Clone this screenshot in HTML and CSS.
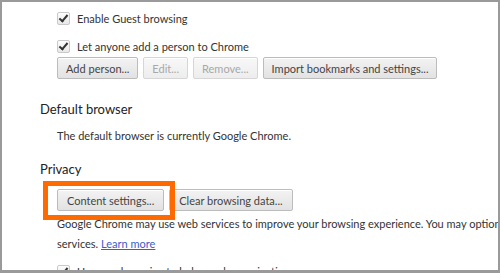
FILE: index.html
```html
<!DOCTYPE html>
<html lang="en">
<head>
  <meta charset="UTF-8">
  <title>Settings - Privacy</title>
  <link rel="stylesheet" href="styles.css">
</head>
<body>
  <div class="frame">
    <div class="settings">

      <div class="section-body">
        <label class="check-row">
          <span class="checkbox checked"></span>
          <span>Enable Guest browsing</span>
        </label>
        <label class="check-row">
          <span class="checkbox checked"></span>
          <span>Let anyone add a person to Chrome</span>
        </label>
        <div class="button-row">
          <button class="button">Add person...</button>
          <button class="button" disabled>Edit...</button>
          <button class="button" disabled>Remove...</button>
          <button class="button">Import bookmarks and settings...</button>
        </div>
      </div>

      <h3 class="section-title title-default">Default browser</h3>
      <div class="section-body">
        <p class="info">The default browser is currently Google Chrome.</p>
      </div>

      <h3 class="section-title title-privacy">Privacy</h3>
      <div class="section-body">
        <div class="button-row privacy-row">
          <span class="highlight"></span>
          <button class="button">Content settings...</button>
          <button class="button">Clear browsing data...</button>
        </div>
        <p class="info wrap">Google Chrome may use web services to improve your browsing experience. You may optionally disable these<br>services. <a href="#" class="link">Learn more</a></p>
        <label class="check-row last-row">
          <span class="checkbox checked"></span>
          <span>Use a web service to help resolve navigation errors</span>
        </label>
      </div>

    </div>
  </div>
</body>
</html>
```

FILE: styles.css
```css
:root {
  --text-color: #333;
  --muted-text: #a8a8a8;
  --frame-color: #9a9a9a;
  --highlight: #ff6a00;
  --link-color: #3b5ccc;

  --primary-font: Lato, "Open Sans", sans-serif;
}

body {
  margin: 0;
  font-family: var(--primary-font);
  color: var(--text-color);
  background: #fff;
}

.frame {
  width: 500px;
  height: 273px;
  box-sizing: border-box;
  border: 2px solid var(--frame-color);
  border-bottom-width: 3px;
  overflow: hidden;
  background: #fff;
}

.settings {
  padding: 9px 0 0 38px;
  font-size: 11px;
  white-space: nowrap;
}

.section-body {
  padding-left: 17px;
}

.check-row {
  display: flex;
  align-items: center;
  gap: 7px;
  height: 14px;
  margin-bottom: 14px;
}

.checkbox {
  width: 11px;
  height: 11px;
  border: 1px solid #c9c9c9;
  border-radius: 2px;
  background: linear-gradient(#fdfdfd, #e8e8e8);
  position: relative;
  flex-shrink: 0;
}

/* the tick */
.checkbox.checked::after {
  content: "";
  position: absolute;
  left: 3px;
  top: 0px;
  width: 3px;
  height: 7px;
  border: solid #333;
  border-width: 0 2px 2px 0;
  transform: rotate(40deg);
}

.button-row {
  display: flex;
  gap: 5px;
  margin-top: -10px;
}

.button {
  height: 22px;
  padding: 0 8px;
  border: 1px solid #bcbcbc;
  border-radius: 2px;
  background: linear-gradient(#f3f3f3, #e2e2e2);
  font-family: var(--primary-font);
  font-size: 11px;
  color: #444;
  box-shadow: inset 0 1px 0 #fff;
}

.button:disabled {
  color: var(--muted-text);
  border-color: #d6d6d6;
  background: linear-gradient(#f8f8f8, #ededed);
}

.section-title {
  margin: 0;
  font-size: 13px;
  font-weight: 400;
  color: #222;
  line-height: 18px;
}

.title-default {
  margin-top: 21px;
}

.title-privacy {
  margin-top: 15px;
}

.info {
  margin: 9px 0 0;
  line-height: 18px;
}

.privacy-row {
  position: relative;
  margin-top: 11px;
}

.highlight {
  position: absolute;
  left: -14px;
  top: -8px;
  width: 122px;
  height: 29px;
  border: 5px solid var(--highlight);
  pointer-events: none;
}

.privacy-row .button {
  padding: 0 9px;
}

.wrap {
  margin-top: 3px;
  line-height: 20px;
}

.link {
  color: var(--link-color);
}

.last-row {
  margin-top: 10px;
}
```
